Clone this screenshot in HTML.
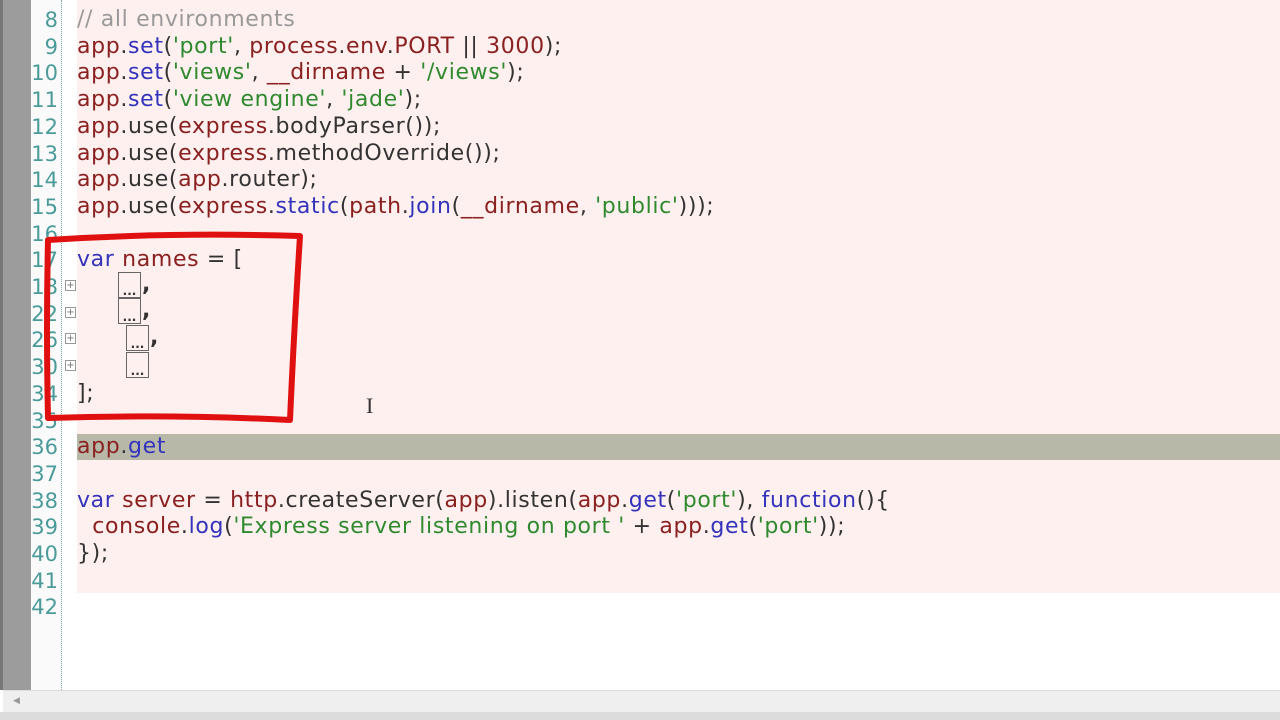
<!DOCTYPE html>
<html><head><meta charset="utf-8"><style>
body{margin:0;width:1280px;height:720px;overflow:hidden;background:#fff;position:relative;font-family:"DejaVu Sans","Liberation Sans",sans-serif;}
#lb{position:absolute;left:0;top:0;width:31px;height:690px;background:#9c9c9c;border-left:3px solid #777;box-sizing:border-box}
#gut{position:absolute;left:31px;top:0;width:30px;height:690px;background:#fafafa;border-right:1px dotted #7aa;}
#pink{position:absolute;left:77px;top:0;width:1203px;height:593px;background:#fdf0ef}
#hl{position:absolute;left:77px;top:434px;width:1203px;height:26px;background:#b8b8a8}
.r{position:absolute;height:26.7px;line-height:26.7px;font-size:22px;letter-spacing:0.65px;white-space:pre;transform:translateY(2px)}
.n{left:28px;width:30px;text-align:right;color:#4a9a9a;font-size:21px;letter-spacing:0}
.c{left:77px;color:#333}
.a{color:#8a2020}.b{color:#3333bb}.g{color:#2f8a2f}.k{color:#3333bb}.cm{color:#999}
.fold{position:absolute;left:65px;width:11px;height:11px;border:1px solid #999;box-sizing:border-box;font-size:10px;line-height:9px;text-align:center;color:#777}
.dot{position:absolute;width:23px;height:26px;border:1.5px solid #666;box-sizing:border-box;font-size:12px;line-height:36px;text-align:center;color:#333;background:#fdf0ef;font-weight:bold}
.cm2{position:absolute;font-size:22px;font-weight:bold;color:#333}
#sb{position:absolute;left:3px;top:690px;width:1277px;height:22px;background:#efefef;border-top:1px solid #ddd}
#bot{position:absolute;left:0;top:712px;width:1280px;height:8px;background:#dcdcdc}
</style></head><body>
<div id="lb"></div><div id="gut"></div><div id="pink"></div><div id="hl"></div>
<div class="r n" style="top:5px">8</div><div class="r c" style="top:5px"><span class="cm">// all environments</span></div>
<div class="r n" style="top:31.7px">9</div><div class="r c" style="top:31.7px"><span class="a">app</span>.<span class="b">set</span>(<span class="g">'port'</span>, <span class="a">process</span>.<span class="a">env</span>.<span class="a">PORT</span> || <span class="a">3000</span>);</div>
<div class="r n" style="top:58.4px">10</div><div class="r c" style="top:58.4px"><span class="a">app</span>.<span class="b">set</span>(<span class="g">'views'</span>, <span class="a">__dirname</span> + <span class="g">'/views'</span>);</div>
<div class="r n" style="top:85.1px">11</div><div class="r c" style="top:85.1px"><span class="a">app</span>.<span class="b">set</span>(<span class="g">'view engine'</span>, <span class="g">'jade'</span>);</div>
<div class="r n" style="top:111.8px">12</div><div class="r c" style="top:111.8px"><span class="a">app</span>.use(<span class="a">express</span>.bodyParser());</div>
<div class="r n" style="top:138.5px">13</div><div class="r c" style="top:138.5px"><span class="a">app</span>.use(<span class="a">express</span>.methodOverride());</div>
<div class="r n" style="top:165.2px">14</div><div class="r c" style="top:165.2px"><span class="a">app</span>.use(<span class="a">app</span>.router);</div>
<div class="r n" style="top:191.9px">15</div><div class="r c" style="top:191.9px"><span class="a">app</span>.use(<span class="a">express</span>.<span class="b">static</span>(<span class="a">path</span>.<span class="b">join</span>(<span class="a">__dirname</span>, <span class="g">'public'</span>)));</div>
<div class="r n" style="top:218.6px">16</div>
<div class="r n" style="top:245.3px">17</div><div class="r c" style="top:245.3px"><span class="k">var</span> <span class="a">names</span> = [</div>
<div class="r n" style="top:272px">18</div>
<div class="r n" style="top:298.7px">22</div>
<div class="r n" style="top:325.4px">26</div>
<div class="r n" style="top:352.1px">30</div>
<div class="fold" style="top:280px">+</div><div class="fold" style="top:307px">+</div><div class="fold" style="top:333px">+</div><div class="fold" style="top:360px">+</div>
<div class="dot" style="left:118px;top:272px">...</div><div class="dot" style="left:118px;top:298px">...</div><div class="dot" style="left:126px;top:325px">...</div><div class="dot" style="left:126px;top:352px">...</div>
<div class="cm2" style="left:142px;top:272px">,</div><div class="cm2" style="left:142px;top:298px">,</div><div class="cm2" style="left:150px;top:325px">,</div>
<div class="r n" style="top:378.8px">34</div><div class="r c" style="top:378.8px">];</div>
<div class="r n" style="top:405.5px">35</div>
<div class="r n" style="top:432.2px">36</div><div class="r c" style="top:432.2px"><span class="a">app</span>.<span class="b">get</span></div>
<div class="r n" style="top:458.9px">37</div>
<div class="r n" style="top:485.6px">38</div><div class="r c" style="top:485.6px"><span class="k">var</span> <span class="a">server</span> = <span class="a">http</span>.createServer(<span class="a">app</span>).listen(<span class="a">app</span>.<span class="b">get</span>(<span class="g">'port'</span>), <span class="k">function</span>(){</div>
<div class="r n" style="top:512.3px">39</div><div class="r c" style="top:512.3px">  <span class="a">console</span>.<span class="b">log</span>(<span class="g">'Express server listening on port '</span> + <span class="a">app</span>.<span class="b">get</span>(<span class="g">'port'</span>));</div>
<div class="r n" style="top:539px">40</div><div class="r c" style="top:539px">});</div>
<div class="r n" style="top:565.7px">41</div>
<div class="r n" style="top:592.4px">42</div>
<svg style="position:absolute;left:0;top:0" width="1280" height="720"><path d="M48 240 Q170 232 300 236 Q294 330 290 420 Q170 414 48 418 Q46 330 48 240 Z" fill="none" stroke="#e01010" stroke-width="6" stroke-linejoin="round"/><text x="366" y="413" font-size="22" fill="#333" font-family="Liberation Serif,serif">I</text></svg>
<div id="sb"><span style="position:absolute;left:10px;top:5px;font-size:9px;color:#999">◀</span></div><div id="bot"></div>
</body></html>
